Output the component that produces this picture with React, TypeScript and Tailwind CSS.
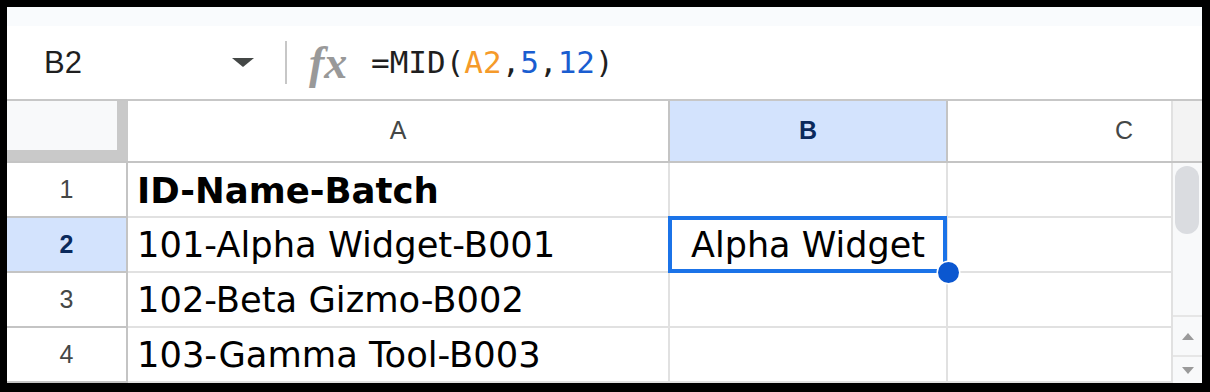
import React from "react"

const rows = [
  { n: "1", a: "ID-Name-Batch", bold: true },
  { n: "2", a: "101-Alpha Widget-B001", b: "Alpha Widget", active: true },
  { n: "3", a: "102-Beta Gizmo-B002" },
  { n: "4", a: "103-Gamma Tool-B003" },
]

const headFont = { fontFamily: '"Liberation Sans", Arial, sans-serif' }
const cellFont = { fontFamily: '"DejaVu Sans", Verdana, sans-serif' }

export default function App() {
  return (
    <div className="w-[1210px] h-[392px] bg-black pt-[7px] pl-[7px] pr-[8px] pb-[9px]">
      <div className="flex h-full w-full flex-col overflow-hidden bg-white">
        {/* top strip */}
        <div className="h-[19px] bg-[#f9fbfd]" />

        {/* formula bar */}
        <div className="flex h-[75px] items-center border-b-2 border-[#c7c7c7]">
          <div className="flex w-[263px] items-center justify-between pl-[37px] pr-[16px]">
            <span className="text-[31px] leading-none text-[#1f1f1f]" style={headFont}>
              B2
            </span>
            <svg width="22" height="9" viewBox="0 0 22 9">
              <path d="M0 0 L22 0 L11 9 Z" fill="#444746" />
            </svg>
          </div>
          <div className="ml-[15px] h-[43px] w-[2px] bg-[#c7c7c7]" />
          <span
            className="ml-[22px] w-[42px] text-[46px] font-bold italic leading-none text-[#999999]"
            style={{ fontFamily: '"Liberation Serif", "Times New Roman", serif' }}
          >
            fx
          </span>
          <span
            className="ml-[20px] text-[31px] leading-none text-[#1f1f1f]"
            style={{ fontFamily: '"DejaVu Sans Mono", monospace' }}
          >
            =MID(<span className="text-[#f59a2a]">A2</span>,
            <span className="text-[#1a5dd0]">5</span>,
            <span className="text-[#1a5dd0]">12</span>)
          </span>
        </div>

        {/* column headers */}
        <div className="flex h-[62px] border-b-2 border-[#c4c4c4] text-[25px] text-[#444746]" style={headFont}>
          <div className="flex w-[121px] flex-col bg-[#c9c9c9]">
            <div className="h-[49px] w-[110px] bg-[#f8f9fa]" />
          </div>
          <div className="flex w-[542px] items-center justify-center border-r-2 border-[#c4c4c4]">A</div>
          <div className="flex w-[278px] items-center justify-center border-r-2 border-[#c4c4c4] bg-[#d3e3fd] font-bold text-[#0b2a5c]">
            B
          </div>
          <div className="flex w-[223px] items-center justify-end pr-[38px]">C</div>
          <div className="flex-1 border-l-2 border-[#e1e1e1] bg-[#f3f3f3]" />
        </div>

        {/* grid body */}
        <div className="flex flex-1">
          <div className="flex flex-col">
            {rows.map(r => (
              <div key={r.n} className="flex h-[55px] border-b-2 border-[#e1e1e1]">
                <div
                  className={
                    r.active
                      ? "flex w-[121px] items-center justify-center border-r-2 border-b-2 -mb-[2px] border-[#c4c4c4] bg-[#d3e3fd] text-[25px] font-bold text-[#0b2a5c]"
                      : "flex w-[121px] items-center justify-center border-r-2 border-b-2 -mb-[2px] border-[#c4c4c4] bg-white text-[25px] text-[#444746]"
                  }
                  style={headFont}
                >
                  {r.n}
                </div>
                <div
                  className={
                    r.bold
                      ? "flex w-[542px] items-center border-r-2 border-[#e1e1e1] pl-[9px] pt-[2px] text-[35.5px] font-bold text-black"
                      : "flex w-[542px] items-center border-r-2 border-[#e1e1e1] pl-[9px] pt-[2px] text-[35.3px] text-black"
                  }
                  style={cellFont}
                >
                  {r.a}
                </div>
                <div
                  className="relative flex w-[278px] items-center justify-center border-r-2 border-[#e1e1e1] pt-[2px] text-[35px] text-black"
                  style={cellFont}
                >
                  {r.b}
                  {r.active && (
                    <>
                      <div className="absolute -top-[2px] -left-[2px] -right-[1px] -bottom-[2px] z-10 border-[4px] border-[#1b73e8]" />
                      <div className="absolute -right-[13px] -bottom-[12px] z-20 h-[21px] w-[21px] rounded-full bg-[#0b57d0] ring-[1.5px] ring-white" />
                    </>
                  )}
                </div>
                <div className="w-[223px]" />
              </div>
            ))}
          </div>

          {/* vertical scrollbar */}
          <div className="flex flex-1 flex-col border-l-2 border-[#e1e1e1] bg-[#f8f9fa]">
            <div className="flex-1 px-[2px] pt-[3px]">
              <div className="h-[68px] w-[24px] rounded-full bg-[#dadce0]" />
            </div>
            <div className="flex h-[42px] items-center justify-center border-t-2 border-b-2 border-[#e6e6e6]">
              <svg width="12" height="7" viewBox="0 0 12 7">
                <path d="M0 7 L12 7 L6 0 Z" fill="#9a9a9a" />
              </svg>
            </div>
            <div className="flex h-[26px] items-center justify-center">
              <svg width="12" height="7" viewBox="0 0 12 7">
                <path d="M0 0 L12 0 L6 7 Z" fill="#9a9a9a" />
              </svg>
            </div>
          </div>
        </div>
      </div>
    </div>
  )
}
